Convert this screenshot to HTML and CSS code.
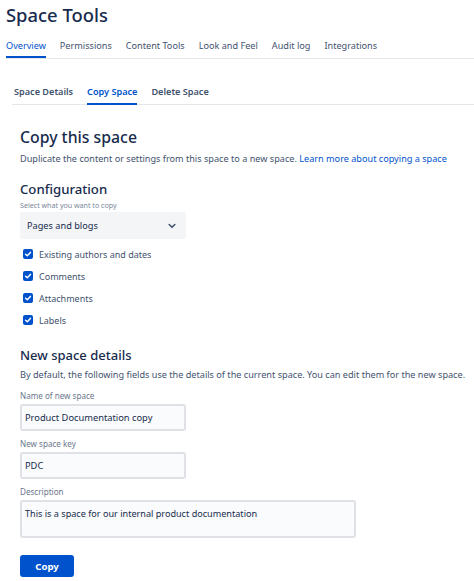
FILE: index.html
```html
<!DOCTYPE html>
<html>
<head>
<meta charset="utf-8">
<link rel="stylesheet" href="styles.css">
</head>
<body>
<div class="page">
  <h1 class="title">Space Tools</h1>
  <nav class="tabs">
    <span class="tab active">Overview</span>
    <span class="tab">Permissions</span>
    <span class="tab">Content Tools</span>
    <span class="tab">Look and Feel</span>
    <span class="tab">Audit log</span>
    <span class="tab">Integrations</span>
  </nav>
  <nav class="subtabs">
    <span class="subtab">Space Details</span>
    <span class="subtab active">Copy Space</span>
    <span class="subtab">Delete Space</span>
  </nav>
  <main class="content">
    <h2 class="h-main">Copy this space</h2>
    <p class="desc">Duplicate the content or settings from this space to a new space. <a class="link">Learn more about copying a space</a></p>
    <h3 class="h-sec">Configuration</h3>
    <div class="label label-sm">Select what you want to copy</div>
    <div class="select"><span>Pages and blogs</span>
      <svg class="chev" width="8" height="6" viewBox="0 0 8 6"><path d="M1.2 1.5 L4 4.3 L6.8 1.5" fill="none" stroke="#42526e" stroke-width="1.6" stroke-linecap="round" stroke-linejoin="round"/></svg>
    </div>
    <ul class="checks">
      <li class="check"><span class="box"><svg width="10" height="10" viewBox="0 0 10 10"><path d="M2.6 5.2 L4.3 6.8 L7.4 3.4" fill="none" stroke="#fff" stroke-width="1.5" stroke-linecap="round" stroke-linejoin="round"/></svg></span>Existing authors and dates</li>
      <li class="check"><span class="box"><svg width="10" height="10" viewBox="0 0 10 10"><path d="M2.6 5.2 L4.3 6.8 L7.4 3.4" fill="none" stroke="#fff" stroke-width="1.5" stroke-linecap="round" stroke-linejoin="round"/></svg></span>Comments</li>
      <li class="check"><span class="box"><svg width="10" height="10" viewBox="0 0 10 10"><path d="M2.6 5.2 L4.3 6.8 L7.4 3.4" fill="none" stroke="#fff" stroke-width="1.5" stroke-linecap="round" stroke-linejoin="round"/></svg></span>Attachments</li>
      <li class="check"><span class="box"><svg width="10" height="10" viewBox="0 0 10 10"><path d="M2.6 5.2 L4.3 6.8 L7.4 3.4" fill="none" stroke="#fff" stroke-width="1.5" stroke-linecap="round" stroke-linejoin="round"/></svg></span>Labels</li>
    </ul>
    <h3 class="h-sec h-new">New space details</h3>
    <p class="desc desc2">By default, the following fields use the details of the current space. You can edit them for the new space.</p>
    <div class="field">
      <div class="label">Name of new space</div>
      <div class="input">Product Documentation copy</div>
    </div>
    <div class="field">
      <div class="label">New space key</div>
      <div class="input">PDC</div>
    </div>
    <div class="field">
      <div class="label">Description</div>
      <div class="input textarea">This is a space for our internal product documentation</div>
    </div>
    <button class="btn">Copy</button>
  </main>
</div>
</body>
</html>
```
FILE: styles.css
```css
* { box-sizing: border-box; }
html, body { margin: 0; padding: 0; background: #fff; }
body {
  font-family: "Noto Sans", "Open Sans", sans-serif;
  color: #172b4d;
}
.page { width: 474px; height: 581px; overflow: hidden; }
.title {
  margin: 0;
  padding: 1px 0 0 6px;
  font-size: 18.4px;
  font-weight: 500;
  line-height: 28px;
  height: 31px;
  color: #172b4d;
}
.tabs {
  display: flex;
  gap: 14px;
  margin-left: 6px;
  border-bottom: 1px solid #e4e6ea;
  height: 28px;
  align-items: flex-start;
}
.tab {
  font-size: 9.15px;
  color: #42526e;
  height: 27px;
  padding-top: 3px;
  line-height: 23px;
}
.tab.active { color: #0052cc; border-bottom: 2px solid #0052cc; }
.subtabs {
  display: flex;
  gap: 14px;
  margin: 22px 0 0 12px;
  padding-left: 2px;
  border-bottom: 1px solid #e4e6ea;
  height: 24px;
}
.subtab {
  font-size: 9.15px;
  font-weight: 600;
  color: #42526e;
  line-height: 22px;
  height: 24px;
}
.subtab.active { color: #0052cc; border-bottom: 2px solid #0052cc; }
.content { padding-left: 20px; }
.h-main {
  margin: 20px 0 0;
  font-size: 15.8px;
  font-weight: 500;
  line-height: 24px;
}
.desc {
  margin: 2px 0 0;
  font-size: 9.15px;
  line-height: 16px;
  color: #42526e;
  white-space: nowrap;
}
.link { color: #0052cc; }
.h-sec {
  margin: 12px 0 0;
  font-size: 13.2px;
  font-weight: 500;
  line-height: 20px;
}
.label {
  font-size: 8.1px;
  color: #6b778c;
  line-height: 14px;
}
.label-sm { font-size: 7.1px; line-height: 12px; color: #7a869a; }
.select {
  width: 166px;
  height: 27px;
  background: #f4f5f7;
  border-radius: 2px;
  display: flex;
  align-items: center;
  justify-content: space-between;
  padding: 0 10px 0 7px;
  font-size: 9.2px;
  color: #172b4d;
  margin-top: 1px;
}
.checks { list-style: none; margin: 4px 0 0; padding: 0 0 0 3px; }
.check {
  display: flex;
  align-items: center;
  height: 22px;
  font-size: 9.0px;
  color: #42526e;
}
.box {
  width: 10px;
  height: 10px;
  background: #0052cc;
  border-radius: 2px;
  margin-right: 6px;
  display: flex;
}
.h-new { margin-top: 14px; font-size: 13px; }
.desc2 { margin-top: 2px; }
.field { margin-top: 6px; }
.field:first-of-type { margin-top: 7px; }
.input {
  width: 166px;
  height: 27px;
  margin-top: 1px;
  background: #fafbfc;
  border: 2px solid #dfe1e6;
  border-radius: 3px;
  font-size: 9.3px;
  color: #172b4d;
  padding: 0 3px;
  line-height: 23px;
}
.textarea {
  width: 336px;
  height: 38px;
  font-size: 9.1px;
}
.btn {
  display: block;
  margin-top: 17px;
  width: 54px;
  height: 22px;
  border: 0;
  border-radius: 3px;
  background: #0052cc;
  color: #fff;
  font-family: inherit;
  font-size: 9.6px;
  font-weight: 700;
  padding: 0;
}
```
